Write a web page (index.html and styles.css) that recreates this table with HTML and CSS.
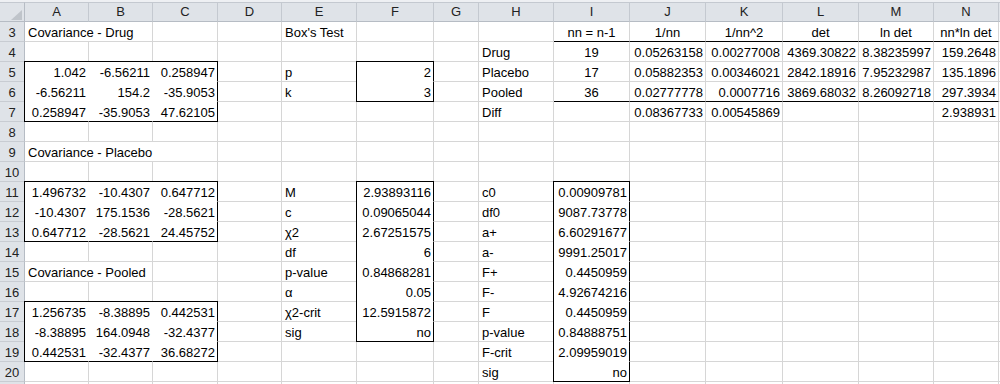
FILE: index.html
```html
<!DOCTYPE html>
<html>
<head>
<meta charset="utf-8">
<link rel="stylesheet" href="styles.css">
</head>
<body>
<div class="sheet">
  <div class="topbar"></div>
  <div class="row hdr">
    <div class="h corner"><div class="tri"></div></div>
    <div class="h">A</div><div class="h">B</div><div class="h">C</div><div class="h">D</div><div class="h">E</div><div class="h">F</div><div class="h">G</div><div class="h">H</div><div class="h">I</div><div class="h">J</div><div class="h">K</div><div class="h">L</div><div class="h">M</div><div class="h">N</div><div class="h x"></div>
  </div>
  <div class="row">
    <div class="rh">3</div>
    <div class="c s2">Covariance - Drug</div><div class="c"></div><div class="c"></div>
    <div class="c">Box's Test</div><div class="c"></div><div class="c"></div><div class="c"></div>
    <div class="c ctr bb">nn = n-1</div><div class="c ctr bb">1/nn</div><div class="c ctr bb">1/nn^2</div><div class="c ctr bb">det</div><div class="c ctr bb">ln det</div><div class="c ctr bb">nn*ln det</div><div class="c x"></div>
  </div>
  <div class="row">
    <div class="rh">4</div>
    <div class="c"></div><div class="c"></div><div class="c"></div><div class="c"></div><div class="c"></div><div class="c"></div><div class="c"></div>
    <div class="c">Drug</div><div class="c ctr">19</div><div class="c n">0.05263158</div><div class="c n">0.00277008</div><div class="c n">4369.30822</div><div class="c n">8.38235997</div><div class="c n">159.2648</div><div class="c x"></div>
  </div>
  <div class="row">
    <div class="rh">5</div>
    <div class="c n bx eTL">1.042</div><div class="c n bx eT">-6.56211</div><div class="c n bx eT eR">0.258947</div><div class="c"></div>
    <div class="c">p</div><div class="c n bx eTL eR">2</div><div class="c"></div>
    <div class="c">Placebo</div><div class="c ctr">17</div><div class="c n">0.05882353</div><div class="c n">0.00346021</div><div class="c n">2842.18916</div><div class="c n">7.95232987</div><div class="c n">135.1896</div><div class="c x"></div>
  </div>
  <div class="row">
    <div class="rh">6</div>
    <div class="c n bx eL">-6.56211</div><div class="c n bx">154.2</div><div class="c n bx eR">-35.9053</div><div class="c"></div>
    <div class="c">k</div><div class="c n bx eL eR eB">3</div><div class="c"></div>
    <div class="c">Pooled</div><div class="c ctr bb">36</div><div class="c n bb">0.02777778</div><div class="c n bb">0.0007716</div><div class="c n bb">3869.68032</div><div class="c n bb">8.26092718</div><div class="c n bb">297.3934</div><div class="c x"></div>
  </div>
  <div class="row">
    <div class="rh">7</div>
    <div class="c n bx eL eB">0.258947</div><div class="c n bx eB">-35.9053</div><div class="c n bx eR eB">47.62105</div><div class="c"></div>
    <div class="c"></div><div class="c"></div><div class="c"></div>
    <div class="c">Diff</div><div class="c"></div><div class="c n">0.08367733</div><div class="c n">0.00545869</div><div class="c"></div><div class="c"></div><div class="c n">2.938931</div><div class="c x"></div>
  </div>
  <div class="row">
    <div class="rh">8</div>
    <div class="c"></div><div class="c"></div><div class="c"></div><div class="c"></div><div class="c"></div><div class="c"></div><div class="c"></div><div class="c"></div><div class="c"></div><div class="c"></div><div class="c"></div><div class="c"></div><div class="c"></div><div class="c"></div><div class="c x"></div>
  </div>
  <div class="row">
    <div class="rh">9</div>
    <div class="c s3">Covariance - Placebo</div><div class="c"></div><div class="c"></div><div class="c"></div><div class="c"></div><div class="c"></div><div class="c"></div><div class="c"></div><div class="c"></div><div class="c"></div><div class="c"></div><div class="c"></div><div class="c x"></div>
  </div>
  <div class="row">
    <div class="rh">10</div>
    <div class="c"></div><div class="c"></div><div class="c"></div><div class="c"></div><div class="c"></div><div class="c"></div><div class="c"></div><div class="c"></div><div class="c"></div><div class="c"></div><div class="c"></div><div class="c"></div><div class="c"></div><div class="c"></div><div class="c x"></div>
  </div>
  <div class="row">
    <div class="rh">11</div>
    <div class="c n bx eTL">1.496732</div><div class="c n bx eT">-10.4307</div><div class="c n bx eT eR">0.647712</div><div class="c"></div>
    <div class="c">M</div><div class="c n bx eTL eR">2.93893116</div><div class="c"></div>
    <div class="c">c0</div><div class="c n bx eTL eR">0.00909781</div><div class="c"></div><div class="c"></div><div class="c"></div><div class="c"></div><div class="c"></div><div class="c x"></div>
  </div>
  <div class="row">
    <div class="rh">12</div>
    <div class="c n bx eL">-10.4307</div><div class="c n bx">175.1536</div><div class="c n bx eR">-28.5621</div><div class="c"></div>
    <div class="c">c</div><div class="c n bx eL eR">0.09065044</div><div class="c"></div>
    <div class="c">df0</div><div class="c n bx eL eR">9087.73778</div><div class="c"></div><div class="c"></div><div class="c"></div><div class="c"></div><div class="c"></div><div class="c x"></div>
  </div>
  <div class="row">
    <div class="rh">13</div>
    <div class="c n bx eL eB">0.647712</div><div class="c n bx eB">-28.5621</div><div class="c n bx eR eB">24.45752</div><div class="c"></div>
    <div class="c">χ2</div><div class="c n bx eL eR">2.67251575</div><div class="c"></div>
    <div class="c">a+</div><div class="c n bx eL eR">6.60291677</div><div class="c"></div><div class="c"></div><div class="c"></div><div class="c"></div><div class="c"></div><div class="c x"></div>
  </div>
  <div class="row">
    <div class="rh">14</div>
    <div class="c"></div><div class="c"></div><div class="c"></div><div class="c"></div>
    <div class="c">df</div><div class="c n bx eL eR">6</div><div class="c"></div>
    <div class="c">a-</div><div class="c n bx eL eR">9991.25017</div><div class="c"></div><div class="c"></div><div class="c"></div><div class="c"></div><div class="c"></div><div class="c x"></div>
  </div>
  <div class="row">
    <div class="rh">15</div>
    <div class="c s2">Covariance - Pooled</div><div class="c"></div><div class="c"></div>
    <div class="c">p-value</div><div class="c n bx eL eR">0.84868281</div><div class="c"></div>
    <div class="c">F+</div><div class="c n bx eL eR">0.4450959</div><div class="c"></div><div class="c"></div><div class="c"></div><div class="c"></div><div class="c"></div><div class="c x"></div>
  </div>
  <div class="row">
    <div class="rh">16</div>
    <div class="c"></div><div class="c"></div><div class="c"></div><div class="c"></div>
    <div class="c">α</div><div class="c n bx eL eR">0.05</div><div class="c"></div>
    <div class="c">F-</div><div class="c n bx eL eR">4.92674216</div><div class="c"></div><div class="c"></div><div class="c"></div><div class="c"></div><div class="c"></div><div class="c x"></div>
  </div>
  <div class="row">
    <div class="rh">17</div>
    <div class="c n bx eTL">1.256735</div><div class="c n bx eT">-8.38895</div><div class="c n bx eT eR">0.442531</div><div class="c"></div>
    <div class="c">χ2-crit</div><div class="c n bx eL eR">12.5915872</div><div class="c"></div>
    <div class="c">F</div><div class="c n bx eL eR">0.4450959</div><div class="c"></div><div class="c"></div><div class="c"></div><div class="c"></div><div class="c"></div><div class="c x"></div>
  </div>
  <div class="row">
    <div class="rh">18</div>
    <div class="c n bx eL">-8.38895</div><div class="c n bx">164.0948</div><div class="c n bx eR">-32.4377</div><div class="c"></div>
    <div class="c">sig</div><div class="c n bx eL eR eB">no</div><div class="c"></div>
    <div class="c">p-value</div><div class="c n bx eL eR">0.84888751</div><div class="c"></div><div class="c"></div><div class="c"></div><div class="c"></div><div class="c"></div><div class="c x"></div>
  </div>
  <div class="row">
    <div class="rh">19</div>
    <div class="c n bx eL eB">0.442531</div><div class="c n bx eB">-32.4377</div><div class="c n bx eR eB">36.68272</div><div class="c"></div>
    <div class="c"></div><div class="c"></div><div class="c"></div>
    <div class="c">F-crit</div><div class="c n bx eL eR">2.09959019</div><div class="c"></div><div class="c"></div><div class="c"></div><div class="c"></div><div class="c"></div><div class="c x"></div>
  </div>
  <div class="row">
    <div class="rh">20</div>
    <div class="c"></div><div class="c"></div><div class="c"></div><div class="c"></div><div class="c"></div><div class="c"></div><div class="c"></div>
    <div class="c">sig</div><div class="c n bx eL eR eB">no</div><div class="c"></div><div class="c"></div><div class="c"></div><div class="c"></div><div class="c"></div><div class="c x"></div>
  </div>
  <div class="row">
    <div class="rh"></div>
    <div class="c"></div><div class="c"></div><div class="c"></div><div class="c"></div><div class="c"></div><div class="c"></div><div class="c"></div><div class="c"></div><div class="c"></div><div class="c"></div><div class="c"></div><div class="c"></div><div class="c"></div><div class="c"></div><div class="c x"></div>
  </div>
</div>
</body>
</html>
```

FILE: styles.css
```css
html, body {
  margin: 0;
  padding: 0;
  background: #ffffff;
}
body {
  width: 1000px;
  height: 384px;
  overflow: hidden;
  font-family: "Liberation Sans", Arial, sans-serif;
  font-size: 13px;
  color: #000000;
}
.sheet {
  display: flex;
  flex-direction: column;
}
.topbar {
  height: 2px;
  background: #eef0f3;
  flex: none;
}
.row {
  display: grid;
  grid-template-columns: 25px 64px 64px 65px 64px 75px 77px 45px 75px 76px 76px 77px 76px 75px 65px 1fr;
  height: 20px;
  flex: none;
}
.h {
  box-sizing: border-box;
  height: 20px;
  background: #dfe3e8;
  border-top: 1px solid #c4c9d0;
  border-right: 1px solid #c4c9d0;
  border-bottom: 1px solid #b6bcc4;
  text-align: center;
  color: #222222;
  padding-top: 1px;
  line-height: 16px;
}
.h.x {
  border-right: 0;
}
.corner {
  display: flex;
  justify-content: flex-end;
  align-items: flex-end;
  padding: 0 2px 1px 0;
  border-right-color: #b6bcc4;
}
.tri {
  width: 11px;
  height: 10px;
  background: #bfc4ca;
  clip-path: polygon(100% 0, 100% 100%, 0 100%);
}
.rh {
  box-sizing: border-box;
  height: 20px;
  background: #dfe3e8;
  border-right: 1px solid #b6bcc4;
  border-bottom: 1px solid #c8ccd2;
  text-align: center;
  color: #222222;
  padding-top: 3px;
  line-height: 16px;
}
.c {
  box-sizing: border-box;
  height: 20px;
  border-right: 1px solid #d6d6d6;
  border-bottom: 1px solid #d6d6d6;
  padding: 3px 2px 0 3px;
  line-height: 16px;
  white-space: nowrap;
  overflow: hidden;
}
.c.x {
  border-right: 0;
}
.s2 {
  grid-column: span 2;
}
.s3 {
  grid-column: span 3;
}
.n {
  text-align: right;
}
.ctr {
  text-align: center;
  padding-left: 2px;
}
.bb {
  border-bottom-color: #000000;
}
.bx {
  background: #ffffff;
  border-right-color: #ffffff;
  border-bottom-color: #ffffff;
}
.bx.eR {
  border-right-color: #000000;
}
.bx.eB {
  border-bottom-color: #000000;
}
.eT {
  box-shadow: 0 -1px 0 #000000;
}
.eL {
  box-shadow: -1px 0 0 #000000;
}
.eTL {
  box-shadow: 0 -1px 0 #000000, -1px 0 0 #000000, -1px -1px 0 #000000;
}
```
